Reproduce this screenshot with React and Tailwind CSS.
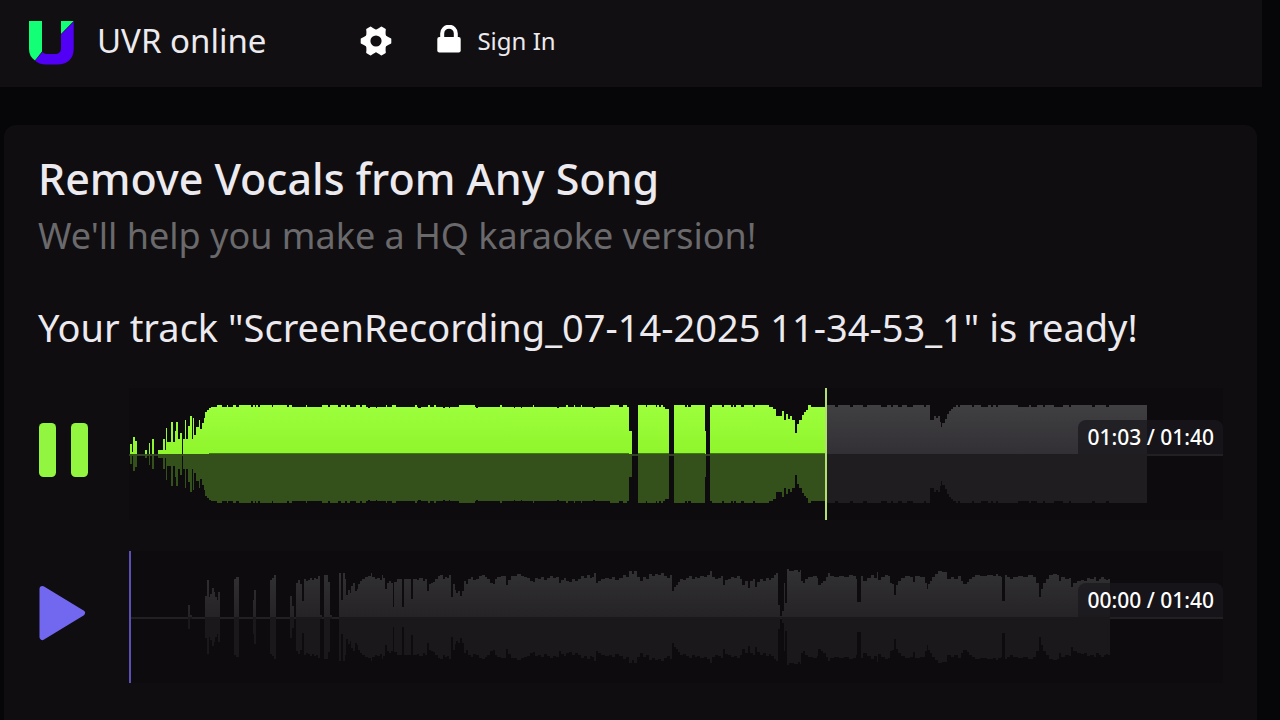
import React, { useState } from "react";

const WAVE_WIDTH = 1094;
const MIDDLE = 66;

// Each pair is [start x, height]; the height holds until the next start.
const VOCALS = {
  end: 1018,
  steps: [
    [1,10],[3,2],[4,17],[6,13],[8,0],[16,4],[18,0],[20,11],[21,0],[23,15],[25,0],[29,4],[34,15],[36,4],[37,26],[38,12],
    [42,32],[44,12],[46,23],[47,32],[49,15],[51,21],[53,0],[54,15],[56,34],[57,15],[59,28],[61,38],[63,15],[64,36],[65,19],
    [67,27],[70,34],[71,25],[73,31],[75,36],[76,42],[78,44],[80,46],[82,47],[88,49],[93,47],[98,49],[99,47],[104,49],
    [107,47],[110,49],[122,47],[124,49],[126,47],[127,49],[129,47],[131,49],[143,47],[144,49],[158,47],[160,49],[163,47],
    [177,49],[178,47],[193,49],[199,47],[201,49],[209,47],[212,49],[216,47],[218,49],[221,47],[227,49],[231,47],[233,49],
    [237,47],[239,46],[241,47],[247,46],[248,47],[257,49],[258,47],[263,49],[267,47],[286,49],[288,47],[289,46],[292,47],
    [299,49],[301,47],[305,49],[307,47],[314,46],[316,47],[320,46],[321,47],[330,49],[346,47],[347,46],[349,47],[371,49],
    [373,47],[385,46],[386,47],[392,46],[393,47],[404,49],[405,47],[428,46],[430,47],[437,49],[439,47],[445,49],[446,47],
    [452,49],[453,47],[464,46],[466,47],[481,49],[490,47],[494,49],[498,47],[500,23],[503,0],[509,49],[517,47],[518,49],
    [527,47],[528,49],[530,47],[532,49],[534,47],[536,45],[540,0],[545,49],[556,47],[558,49],[559,47],[562,49],[576,23],
    [577,0],[581,47],[583,49],[593,47],[595,49],[602,47],[604,49],[605,47],[607,49],[612,47],[615,49],[624,47],[626,49],
    [640,47],[644,45],[647,38],[653,43],[655,34],[657,40],[659,35],[661,38],[663,34],[666,21],[668,30],[670,34],[673,39],
    [675,42],[677,44],[679,49],[682,47],[698,49],[706,47],[709,49],[721,47],[724,49],[734,47],[738,49],[752,47],[758,49],
    [762,47],[764,49],[769,47],[773,49],[778,47],[784,49],[795,47],[797,49],[801,34],[805,38],[807,36],[809,38],[811,32],
    [812,27],[813,31],[816,35],[818,40],[820,43],[822,45],[824,47],[827,49],[829,47],[831,49],[843,47],[845,49],[852,47],
    [859,49],[862,47],[864,49],[867,47],[869,49],[889,47],[900,49],[902,47],[908,49],[914,47],[916,49],[925,47],[934,49],
    [940,47],[942,49],[963,47],[966,49],[977,47],[980,49],
  ],
};

const INSTRUMENTAL = {
  end: 981,
  steps: [
    [59,12],[61,2],[63,0],[76,21],[78,37],[80,20],[81,23],[83,29],[85,25],[86,20],[88,17],[89,25],[91,0],[105,38],[107,40],
    [110,0],[124,17],[125,27],[127,0],[141,37],[143,39],[145,42],[147,0],[161,21],[163,11],[165,0],[167,34],[169,37],
    [171,33],[173,16],[175,38],[177,36],[179,37],[181,39],[183,37],[185,39],[187,38],[189,41],[191,2],[193,0],[195,42],
    [199,35],[201,2],[203,0],[210,44],[212,17],[214,44],[216,38],[217,22],[219,27],[221,24],[222,31],[224,34],[226,26],
    [228,28],[229,33],[231,36],[233,38],[236,40],[239,41],[242,44],[243,40],[246,38],[248,39],[251,37],[253,42],[254,39],
    [256,28],[258,34],[260,36],[262,34],[264,10],[265,35],[268,38],[273,10],[275,38],[282,18],[284,38],[288,37],[290,39],
    [294,36],[296,38],[298,26],[300,33],[302,34],[304,35],[306,38],[309,41],[311,42],[314,38],[316,40],[318,39],[320,42],
    [322,20],[324,33],[326,27],[327,24],[329,26],[331,21],[333,26],[335,36],[337,33],[339,38],[342,40],[344,37],[347,38],
    [350,41],[353,42],[356,40],[358,38],[361,34],[364,33],[366,38],[368,40],[372,41],[377,32],[379,37],[382,41],[388,43],
    [392,41],[395,40],[398,39],[401,36],[404,35],[406,39],[409,38],[412,40],[415,37],[418,39],[421,41],[424,39],[427,40],
    [430,34],[432,37],[435,39],[437,36],[440,35],[443,38],[446,36],[449,38],[452,41],[455,39],[458,42],[461,39],[463,40],
    [465,44],[467,34],[469,36],[472,38],[476,39],[480,38],[483,40],[486,37],[490,39],[494,42],[497,40],[500,46],[503,43],
    [505,46],[508,40],[511,36],[514,40],[517,38],[520,43],[523,41],[526,43],[529,42],[532,44],[535,41],[538,39],[541,42],
    [543,26],[545,30],[547,32],[549,35],[551,38],[554,37],[557,39],[560,41],[563,38],[566,40],[568,39],[571,41],[575,40],
    [578,42],[581,46],[583,40],[586,38],[589,39],[592,41],[594,32],[596,37],[599,38],[602,40],[605,39],[608,41],[611,38],
    [613,32],[616,36],[619,29],[621,36],[624,38],[626,30],[628,35],[631,38],[634,36],[637,39],[640,37],[642,39],[645,42],
    [647,44],[649,12],[651,1],[653,6],[655,34],[656,14],[658,48],[660,46],[665,47],[669,45],[671,47],[672,36],[674,34],
    [676,38],[679,40],[684,41],[688,39],[689,32],[692,34],[694,36],[697,40],[699,44],[701,41],[705,40],[710,41],[715,40],
    [720,42],[724,41],[727,38],[728,15],[732,41],[734,36],[738,39],[742,42],[745,39],[748,45],[749,37],[752,40],[756,42],
    [759,41],[761,34],[763,33],[765,22],[767,32],[769,36],[772,39],[776,41],[781,40],[784,35],[786,41],[791,40],[796,34],
    [798,28],[799,33],[801,36],[803,40],[806,43],[809,46],[813,45],[818,38],[822,40],[825,38],[829,41],[832,36],[834,33],
    [838,35],[840,38],[843,40],[846,42],[851,41],[858,42],[864,41],[867,43],[869,41],[872,40],[873,16],[876,42],[878,40],
    [881,38],[884,40],[889,41],[894,40],[899,42],[904,40],[907,34],[910,20],[912,28],[914,34],[917,38],[920,42],[924,43],
    [928,42],[930,36],[932,40],[936,38],[940,39],[942,30],[944,34],[948,36],[952,37],[955,36],[958,39],[961,38],[965,40],
    [967,36],[970,38],[972,40],[975,38],[977,37],[979,38],
  ],
};

function outline({ steps, end }, direction) {
  let d = `M0 ${MIDDLE}`;
  for (const [x, height] of steps) d += `H${x}V${MIDDLE + direction * height}`;
  return `${d}H${end}V${MIDDLE}Z`;
}

function Waveform({ id, data, played, top, topEnd, bottom, cursor }) {
  const up = outline(data, -1);
  const down = outline(data, 1);
  return (
    <svg
      viewBox={`0 0 ${WAVE_WIDTH} 132`}
      preserveAspectRatio="none"
      shapeRendering="crispEdges"
      className="block h-[132px] w-full bg-[#0d0b0e]"
      aria-hidden="true"
    >
      <defs>
        <linearGradient id={`${id}-rest`} gradientUnits="userSpaceOnUse" x1="0" y1="17" x2="0" y2="66">
          <stop offset="0" stopColor={top} />
          <stop offset="1" stopColor={topEnd} />
        </linearGradient>
        <linearGradient id={`${id}-played`} gradientUnits="userSpaceOnUse" x1="0" y1="17" x2="0" y2="66">
          <stop offset="0" stopColor="#9dff3c" />
          <stop offset="1" stopColor="#8ff52c" />
        </linearGradient>
        <clipPath id={`${id}-clip`}>
          <rect width={played} height="132" />
        </clipPath>
      </defs>
      <rect y="66" width={WAVE_WIDTH} height="2" fill="#212023" />
      <path d={up} fill={`url(#${id}-rest)`} />
      <path d={down} fill={bottom} />
      {played > 0 && (
        <g clipPath={`url(#${id}-clip)`}>
          <rect y="66" width={played} height="2" fill="#34402a" />
          <path d={up} fill={`url(#${id}-played)`} />
          <path d={down} fill="#34501b" />
          <path d={`M80 65.500H500M509 65.500H540M545 65.500H576M581 65.500H${played}`} stroke="#3f7a14" strokeWidth="1" />
        </g>
      )}
      <rect x={Math.max(played - 1, 0)} width="2" height="132" fill={cursor} />
    </svg>
  );
}

function Logo() {
  return (
    <svg viewBox="0 -4 46 48" className="h-12 w-[46px]" aria-hidden="true">
      <path d="M1 0H14V30.500L7 39.500C3 37 1 33 1 28Z" fill="#12ff76" />
      <path d="M33 0H45.700L33 13Z" fill="#12ff76" />
      <path d="M45.700 .8V28C45.700 38 39 43.500 29.500 43.500H18C13.500 43.500 9.500 42 7 39.500L14.500 31C15.500 32.400 17.500 33 20 33H26.500C31 33 33 31 33 27V13.500Z" fill="#5200f5" />
    </svg>
  );
}

function GearIcon() {
  return (
    <svg viewBox="-16 -16 32 32" className="size-8" aria-hidden="true">
      <circle r="8.300" fill="none" stroke="#fff" strokeWidth="5.400" />
      {[0, 60, 120, 180, 240, 300].map((angle) => (
        <path
          key={angle}
          d="M8.500 -5.400C10.300 -4.300 11.400 -3 14.400 -2V2C11.400 3 10.300 4.300 8.500 5.400Z"
          transform={`rotate(${angle})`}
          fill="#fff"
          stroke="#fff"
          strokeWidth="1.800"
          strokeLinejoin="round"
        />
      ))}
    </svg>
  );
}

function LockIcon() {
  return (
    <svg viewBox="0 0 24 28" className="h-7 w-6" aria-hidden="true">
      <path d="M5.200 14V8.500A6.800 6.800 0 0 1 18.800 8.500V14" fill="none" stroke="#fff" strokeWidth="4" />
      <rect x=".3" y="12" width="23.400" height="15.600" rx="2" fill="#fff" />
    </svg>
  );
}

function PlayIcon() {
  return (
    <svg viewBox="0 0 52 56" className="h-14 w-[52px]" aria-hidden="true">
      <path d="M4.500 4L44 28L4.500 52Z" fill="#7268f0" stroke="#7268f0" strokeWidth="6" strokeLinejoin="round" />
    </svg>
  );
}

function PauseIcon() {
  return (
    <svg viewBox="0 0 52 56" className="h-14 w-[52px]" aria-hidden="true">
      <rect x="1" y="1" width="17" height="54" rx="4.500" fill="#92f53f" />
      <rect x="33" y="1" width="17" height="54" rx="4.500" fill="#92f53f" />
    </svg>
  );
}

function Track({ label, time, playing, onToggle, wave }) {
  return (
    <div className="flex items-center gap-[39px]">
      <button type="button" onClick={onToggle} aria-label={`${playing ? "Pause" : "Play"} ${label}`} className="shrink-0 pb-2">
        {playing ? <PauseIcon /> : <PlayIcon />}
      </button>
      <div className="relative min-w-0 flex-1">
        <Waveform {...wave} />
        <span className="absolute right-0 bottom-1/2 rounded-t-lg bg-[#1a181c]/75 px-[9px] text-[21px] leading-[34px] font-medium text-white">
          {time}
        </span>
      </div>
    </div>
  );
}

export default function App() {
  const [playing, setPlaying] = useState("vocals");
  const toggle = (name) => setPlaying(playing === name ? null : name);

  return (
    <div className="flex min-h-screen flex-col bg-[#060507] font-['Noto_Sans',sans-serif] text-[#eceaee]">
      <header className="mr-[18px] flex h-[87px] items-center bg-[#110f12] pb-1.5 pl-7">
        <a href="#" className="flex items-center gap-[23px] text-[33px] leading-10">
          <Logo />
          UVR online
        </a>
        <button type="button" aria-label="Settings" className="ml-[94px]">
          <GearIcon />
        </button>
        <a href="#" className="ml-[45px] flex items-center gap-4 text-2xl">
          <span className="pb-1"><LockIcon /></span>
          Sign In
        </a>
      </header>
      <main className="mt-[38px] mr-[23px] ml-1 flex-1 rounded-t-xl bg-[#0f0d10] px-[34px] pt-7 pb-9">
        <h1 className="text-[43px] leading-[52px] font-medium">Remove Vocals from Any Song</h1>
        <p className="text-[36px] leading-[62px] text-[#6a696b]">We'll help you make a HQ karaoke version!</p>
        <p className="mt-8 text-[38px] leading-[56px]">Your track "ScreenRecording_07-14-2025 11-34-53_1" is ready!</p>
        <div className="mt-[33px] flex flex-col gap-[31px]">
          <Track
            label="vocals"
            time="01:03 / 01:40"
            playing={playing === "vocals"}
            onToggle={() => toggle("vocals")}
            wave={{ id: "vocals", data: VOCALS, played: 697, top: "#403f42", topEnd: "#323034", bottom: "#1f1d20", cursor: "#b2e070" }}
          />
          <Track
            label="instrumental"
            time="00:00 / 01:40"
            playing={playing === "instrumental"}
            onToggle={() => toggle("instrumental")}
            wave={{ id: "instrumental", data: INSTRUMENTAL, played: 0, top: "#323134", topEnd: "#252326", bottom: "#1a181b", cursor: "#5b50b8" }}
          />
        </div>
      </main>
    </div>
  );
}
